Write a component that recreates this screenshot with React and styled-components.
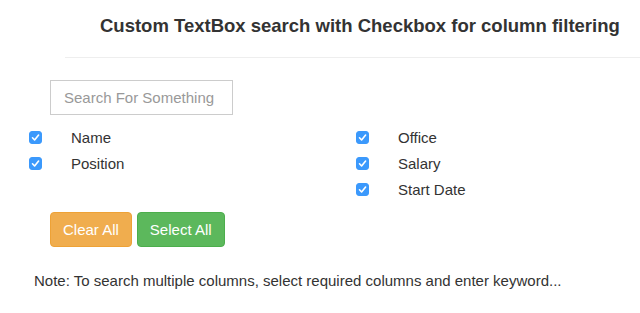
import React, { useState } from "react";
import styled, { createGlobalStyle } from "styled-components";

const Global = createGlobalStyle`
  html, body { margin: 0; padding: 0; background: #fff; }
  body { font-family: "Liberation Sans", Arial, sans-serif; color: #333; font-size: 14px; }
`;

const Page = styled.div`
  width: 640px;
  height: 313px;
  overflow: hidden;
  box-sizing: border-box;
`;

const Header = styled.div`
  margin-left: 65px;
  border-bottom: 1px solid #eee;
  padding: 14px 0 19px 35px;
`;

const Title = styled.h3`
  margin: 0;
  font-size: 18.5px;
  font-weight: bold;
  line-height: 24px;
  color: #333;
  white-space: nowrap;
`;

const SearchBox = styled.input`
  display: block;
  margin: 22px 0 0 50px;
  width: 183px;
  height: 35px;
  box-sizing: border-box;
  border: 1px solid #ccc;
  padding: 0 13px;
  font-family: inherit;
  font-size: 15px;
  color: #555;
  outline: none;
  &::placeholder { color: #999; }
`;

const Grid = styled.div`
  display: grid;
  grid-template-columns: 327px 1fr;
  padding-left: 29px;
  margin-top: 9px;
`;

const Column = styled.div`
  display: flex;
  flex-direction: column;
`;

const Row = styled.label`
  display: flex;
  align-items: center;
  height: 26px;
  font-size: 15px;
  cursor: pointer;
`;

const Box = styled.span`
  width: 13px;
  height: 13px;
  border-radius: 3px;
  background: ${(p) => (p.$on ? "#3b99fc" : "#fff")};
  border: 1px solid ${(p) => (p.$on ? "#3b99fc" : "#aaa")};
  box-sizing: border-box;
  display: flex;
  align-items: center;
  justify-content: center;
  margin-right: 29px;
  flex: none;
`;

const Buttons = styled.div`
  display: flex;
  gap: 5px;
  margin: 10px 0 0 50px;
`;

const Btn = styled.button`
  height: 35px;
  padding: 0 12px;
  border-radius: 4px;
  border: 1px solid ${(p) => p.$border};
  background: ${(p) => p.$bg};
  color: #fff;
  font-family: inherit;
  font-size: 15px;
  cursor: pointer;
`;

const Note = styled.p`
  margin: 25px 0 0 34px;
  font-size: 15px;
  white-space: nowrap;
`;

const Check = () => (
  <svg width="9" height="9" viewBox="0 0 9 9">
    <path d="M1.5 4.8 L3.6 7 L7.6 2" fill="none" stroke="#fff" strokeWidth="1.6" strokeLinecap="round" strokeLinejoin="round" />
  </svg>
);

const left = ["Name", "Position"];
const right = ["Office", "Salary", "Start Date"];

export default function App() {
  const all = [...left, ...right];
  const [on, setOn] = useState(() => Object.fromEntries(all.map((k) => [k, true])));
  const toggle = (k) => setOn((s) => ({ ...s, [k]: !s[k] }));
  const setAll = (v) => setOn(Object.fromEntries(all.map((k) => [k, v])));
  const renderRow = (k) => (
    <Row key={k} onClick={() => toggle(k)}>
      <Box $on={on[k]}>{on[k] && <Check />}</Box>
      {k}
    </Row>
  );
  return (
    <Page>
      <Global />
      <Header>
        <Title>Custom TextBox search with Checkbox for column filtering</Title>
      </Header>
      <SearchBox placeholder="Search For Something" />
      <Grid>
        <Column>{left.map(renderRow)}</Column>
        <Column>{right.map(renderRow)}</Column>
      </Grid>
      <Buttons>
        <Btn $bg="#f0ad4e" $border="#eea236" onClick={() => setAll(false)}>Clear All</Btn>
        <Btn $bg="#5cb85c" $border="#4cae4c" onClick={() => setAll(true)}>Select All</Btn>
      </Buttons>
      <Note>Note: To search multiple columns, select required columns and enter keyword...</Note>
    </Page>
  );
}
